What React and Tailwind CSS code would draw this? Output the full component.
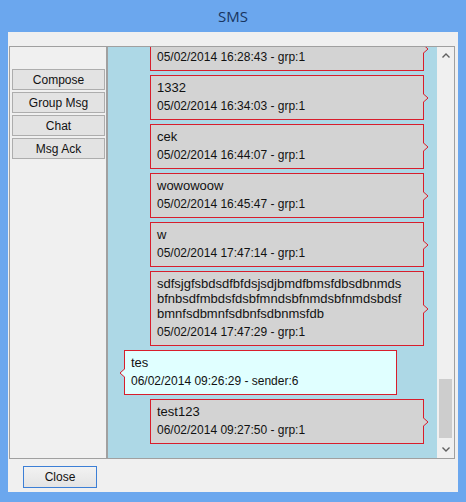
import React from 'react';

const RED = '#d81e2c';

function Pointer({ side, fill }) {
  if (side === 'right') {
    return (
      <svg className="absolute right-[-6px] top-1/2 -translate-y-1/2" width="7" height="9" viewBox="0 0 7 9">
        <rect x="0" y="1" width="2" height="7" fill={fill} />
        <polyline points="1.5,0.5 6,4.5 1.5,8.5" fill={fill} stroke={RED} strokeWidth="1" />
      </svg>
    );
  }
  return (
    <svg className="absolute left-[-6px] top-1/2 -translate-y-1/2" width="7" height="9" viewBox="0 0 7 9">
      <rect x="5" y="1" width="2" height="7" fill={fill} />
      <polyline points="5.5,0.5 1,4.5 5.5,8.5" fill={fill} stroke={RED} strokeWidth="1" />
    </svg>
  );
}

function Bubble({ side = 'right', lines = [], stamp }) {
  const mine = side === 'right';
  const fill = mine ? '#d3d3d3' : '#e0ffff';
  return (
    <div
      className={`relative shrink-0 border border-[#d81e2c] pt-[4px] pb-[5px] pl-[6px] ${
        mine ? 'ml-[42px] w-[274px] bg-[#d3d3d3]' : 'ml-[16px] w-[273px] bg-[#e0ffff]'
      }`}
    >
      {lines.map((l, i) => (
        <div key={i} className="text-[13px] leading-[15px] whitespace-nowrap">{l}</div>
      ))}
      <div className="leading-[15px] mt-[4px] whitespace-nowrap">{stamp}</div>
      <Pointer side={side} fill={fill} />
    </div>
  );
}

function Chevron({ up }) {
  return (
    <svg width="8" height="5" viewBox="0 0 8 5">
      <polyline
        points={up ? '0.5,4.5 4,1 7.5,4.5' : '0.5,0.5 4,4 7.5,0.5'}
        fill="none"
        stroke="#606060"
        strokeWidth="1.4"
      />
    </svg>
  );
}

const messages = [
  { lines: ['w'], stamp: '05/02/2014 16:28:43 - grp:1' },
  { lines: ['1332'], stamp: '05/02/2014 16:34:03 - grp:1' },
  { lines: ['cek'], stamp: '05/02/2014 16:44:07 - grp:1' },
  { lines: ['wowowoow'], stamp: '05/02/2014 16:45:47 - grp:1' },
  { lines: ['w'], stamp: '05/02/2014 17:47:14 - grp:1' },
  {
    lines: [
      'sdfsjgfsbdsdfbfdsjsdjbmdfbmsfdbsdbnmds',
      'bfnbsdfmbdsfdsbfmndsbfnmdsbfnmdsbdsf',
      'bmnfsdbmnfsdbnfsdbnmsfdb',
    ],
    stamp: '05/02/2014 17:47:29 - grp:1',
  },
  { side: 'left', lines: ['tes'], stamp: '06/02/2014 09:26:29 - sender:6' },
  { lines: ['test123'], stamp: '06/02/2014 09:27:50 - grp:1' },
];

const navButtons = ['Compose', 'Group Msg', 'Chat', 'Msg Ack'];

export default function App() {
  return (
    <div className="w-[466px] h-[502px] bg-[#6ba7ee] flex flex-col px-[8px] pb-[10px] font-['Liberation_Sans',Arial,sans-serif] text-[12px] text-[#111]">
      <div className="h-[32px] flex items-center justify-center text-[15px] text-[#183560] font-['Open_Sans','Noto_Sans',sans-serif]">
        SMS
      </div>

      <div className="flex-1 bg-[#f0f0f0] flex flex-col">
        <div className="h-[14px] shrink-0" />

        <div className="h-[413px] ml-[1px] mr-[3px] flex border-y border-[#a0a0a0] shrink-0">
          {/* left nav */}
          <div className="w-[98px] shrink-0 border-x border-[#a0a0a0] pt-[22px] pl-[2px] flex flex-col gap-[2px]">
            {navButtons.map((b) => (
              <button
                key={b}
                className="w-[93px] h-[21px] border border-[#adadad] bg-[#e3e3e3] text-[12px] leading-none text-[#111]"
              >
                {b}
              </button>
            ))}
          </div>

          {/* chat pane */}
          <div className="flex-1 flex border-x border-[#a0a0a0]">
            <div className="flex-1 bg-[#add8e6] overflow-hidden">
              <div className="mt-[-21px] flex flex-col gap-[4px]">
                {messages.map((m, i) => (
                  <Bubble key={i} side={m.side} lines={m.lines} stamp={m.stamp} />
                ))}
              </div>
            </div>
            <div className="w-[17px] shrink-0 bg-[#f0f0f0] flex flex-col">
              <div className="h-[17px] flex items-center justify-center">
                <Chevron up />
              </div>
              <div className="flex-1" />
              <div className="h-[59px] mx-[2px] bg-[#cdcdcd]" />
              <div className="h-[3px]" />
              <div className="h-[17px] flex items-center justify-center">
                <Chevron />
              </div>
            </div>
          </div>
        </div>

        <div className="mt-[7px] ml-[15px]">
          <button className="w-[74px] h-[22px] border border-[#3c7fd6] bg-gradient-to-b from-[#f2f2f2] to-[#e4e4e4] text-[12px] leading-none text-[#111]">
            Close
          </button>
        </div>
      </div>
    </div>
  );
}
